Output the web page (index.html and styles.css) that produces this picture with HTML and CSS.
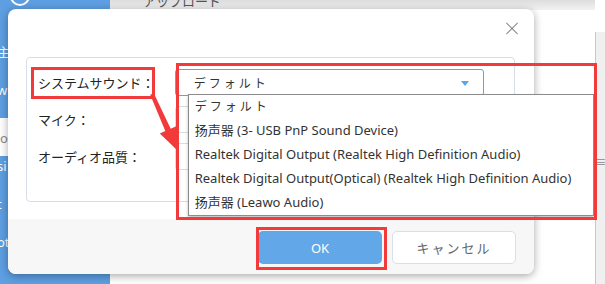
FILE: index.html
```html
<!DOCTYPE html>
<html lang="ja">
<head>
    <meta charset="UTF-8">
    <title>システムサウンド</title>
    <link rel="stylesheet" href="styles.css">
</head>
<body>
    <div class="app">
        <div class="sidebar">
            <span class="ring"></span>
            <div class="side-item">主</div>
            <div class="side-item">w</div>
            <div class="side-item active">oo</div>
            <div class="side-item">si</div>
            <div class="side-item">t</div>
            <div class="side-item">ot</div>
        </div>
        <div class="main">
            <div class="topbar"><span>アップロード</span></div>
        </div>
        <div class="scrollbar"><span class="grip">≡</span></div>

        <!-- 設定ダイアログ -->
        <div class="dialog">
            <div class="dialog-head">
                <span class="close"></span>
            </div>
            <div class="panel">
                <div class="row">
                    <label>システムサウンド：</label>
                    <div class="select active-select">
                        <span>デフォルト</span>
                        <span class="caret"></span>
                        <ul class="options">
                            <li>デフォルト</li>
                            <li>扬声器 (3- USB PnP Sound Device)</li>
                            <li>Realtek Digital Output (Realtek High Definition Audio)</li>
                            <li>Realtek Digital Output(Optical) (Realtek High Definition Audio)</li>
                            <li>扬声器 (Leawo Audio)</li>
                        </ul>
                    </div>
                </div>
                <div class="row">
                    <label>マイク：</label>
                    <div class="select"></div>
                </div>
                <div class="row">
                    <label>オーディオ品質：</label>
                    <div class="select"></div>
                </div>
            </div>
            <div class="dialog-foot">
                <button class="btn btn-ok">OK</button>
                <button class="btn btn-cancel">キャンセル</button>
            </div>
        </div>

        <!-- 注釈 -->
        <div class="mark mark-label"></div>
        <div class="mark mark-select"></div>
        <div class="mark mark-ok"></div>
        <svg class="arrow" width="605" height="284" viewBox="0 0 605 284">
            <polygon points="150.2,94.8 153.8,93.2 170.7,128.7 176.2,126.2 177,150 159.8,133.6 165.3,131.1" fill="#f23a3a"/>
        </svg>
    </div>
</body>
</html>
```

FILE: styles.css
```css
* {
    box-sizing: border-box;
}

body {
    margin: 0;
    font-family: "Noto Sans", "Noto Sans CJK JP", sans-serif;
    color: #333;
}

.app {
    position: relative;
    width: 605px;
    height: 284px;
    overflow: hidden;
    display: flex;
    background: #fff;
}

/* 左メニュー */
.sidebar {
    position: relative;
    width: 110px;
    background: #5d9fe2;
    padding-top: 42px;
}

.ring {
    position: absolute;
    left: 10px;
    top: -14px;
    width: 20px;
    height: 20px;
    border: 2px solid #fff;
    border-radius: 50%;
}

.side-item {
    height: 38px;
    line-height: 20px;
    margin-left: -3px;
    font-size: 13px;
    color: #fff;
}

.side-item.active {
    background: #fff;
    color: #888;
    margin-left: 0;
    padding-top: 10px;
}

.main {
    flex: 1;
}

.topbar {
    height: 10px;
    background: linear-gradient(#ddd, #f2f2f2);
    padding-left: 33px;
    overflow: hidden;
}

.topbar span {
    display: block;
    margin-top: -9px;
    font-size: 13px;
    color: #555;
}

.scrollbar {
    width: 10px;
    margin-top: 32px;
    background: #f0f0f0;
    border-left: 1px solid #c8c8c8;
    display: flex;
    justify-content: center;
    padding-top: 121px;
    font-size: 12px;
    color: #888;
}

/* ダイアログ */
.dialog {
    position: absolute;
    left: 8px;
    top: 9px;
    width: 526px;
    height: 265px;
    background: #fff;
    border-radius: 8px;
    box-shadow: 0 2px 8px rgba(0, 0, 0, 0.35);
    display: flex;
    flex-direction: column;
}

.dialog-head {
    height: 48px;
    position: relative;
}

.close {
    position: absolute;
    right: 16px;
    top: 14px;
    width: 12px;
    height: 12px;
}

.close::before,
.close::after {
    content: "";
    position: absolute;
    left: -2px;
    top: 5px;
    width: 16px;
    height: 1px;
    background: #888;
    transform: rotate(45deg);
}

.close::after {
    transform: rotate(-45deg);
}

.panel {
    margin: 0 19px 17px 18px;
    height: 145px;
    border: 1px solid #d6dee8;
    border-radius: 4px;
    padding: 11px 30px 0 11px;
    display: flex;
    flex-direction: column;
    gap: 10px;
}

.row {
    display: flex;
    align-items: center;
    height: 27px;
}

.row label {
    width: 137px;
    font-size: 13px;
    font-family: "Noto Sans CJK JP", sans-serif;
    color: #222;
}

.select {
    position: relative;
    width: 310px;
    height: 27px;
    border: 1px solid #d6dee8;
    border-radius: 3px;
    padding-left: 18px;
    font-size: 12px;
    line-height: 25px;
    font-family: "Noto Sans CJK JP", sans-serif;
    letter-spacing: 3px;
}

.active-select {
    border-color: #5aa6ea;
}

.caret {
    position: absolute;
    right: 14px;
    top: 11px;
    border-left: 4px solid transparent;
    border-right: 4px solid transparent;
    border-top: 5px solid #5aa6ea;
}

.options {
    position: absolute;
    z-index: 2;
    left: 12px;
    top: 24px;
    width: 406px;
    margin: 0;
    padding: 0;
    list-style: none;
    background: #fff;
    border: 1px solid #8c8c8c;
    box-shadow: 0 2px 3px rgba(0, 0, 0, 0.25);
    letter-spacing: 0;
}

.options li {
    height: 24px;
    line-height: 23px;
    padding-left: 6px;
    font-size: 13px;
    font-family: "Noto Sans", "Noto Sans CJK JP", sans-serif;
    color: #333;
    white-space: nowrap;
}

.options li:first-child {
    font-size: 12px;
    letter-spacing: 3px;
}

.dialog-foot {
    flex: 1;
    background: #f7f7f7;
    border-radius: 0 0 8px 8px;
    display: flex;
    justify-content: flex-end;
    align-items: center;
    gap: 10px;
    padding: 2px 18px 0 0;
}

.btn {
    width: 124px;
    height: 33px;
    border-radius: 5px;
    font-size: 13px;
    font-family: "Noto Sans", "Noto Sans CJK JP", sans-serif;
}

.btn-ok {
    background: #62a8e8;
    border: none;
    color: #fff;
}

.btn-cancel {
    background: #fff;
    border: 1px solid #d8dfe8;
    color: #666;
    letter-spacing: 2px;
}

/* 赤枠 */
.mark {
    position: absolute;
    z-index: 3;
    border: 3px solid #f23a3a;
}

.mark-label {
    left: 31px;
    top: 67px;
    width: 124px;
    height: 32px;
}

.mark-select {
    left: 176px;
    top: 63px;
    width: 421px;
    height: 157px;
}

.mark-ok {
    left: 256px;
    top: 227px;
    width: 131px;
    height: 43px;
}

.arrow {
    position: absolute;
    z-index: 3;
    left: 0;
    top: 0;
    pointer-events: none;
}
```
